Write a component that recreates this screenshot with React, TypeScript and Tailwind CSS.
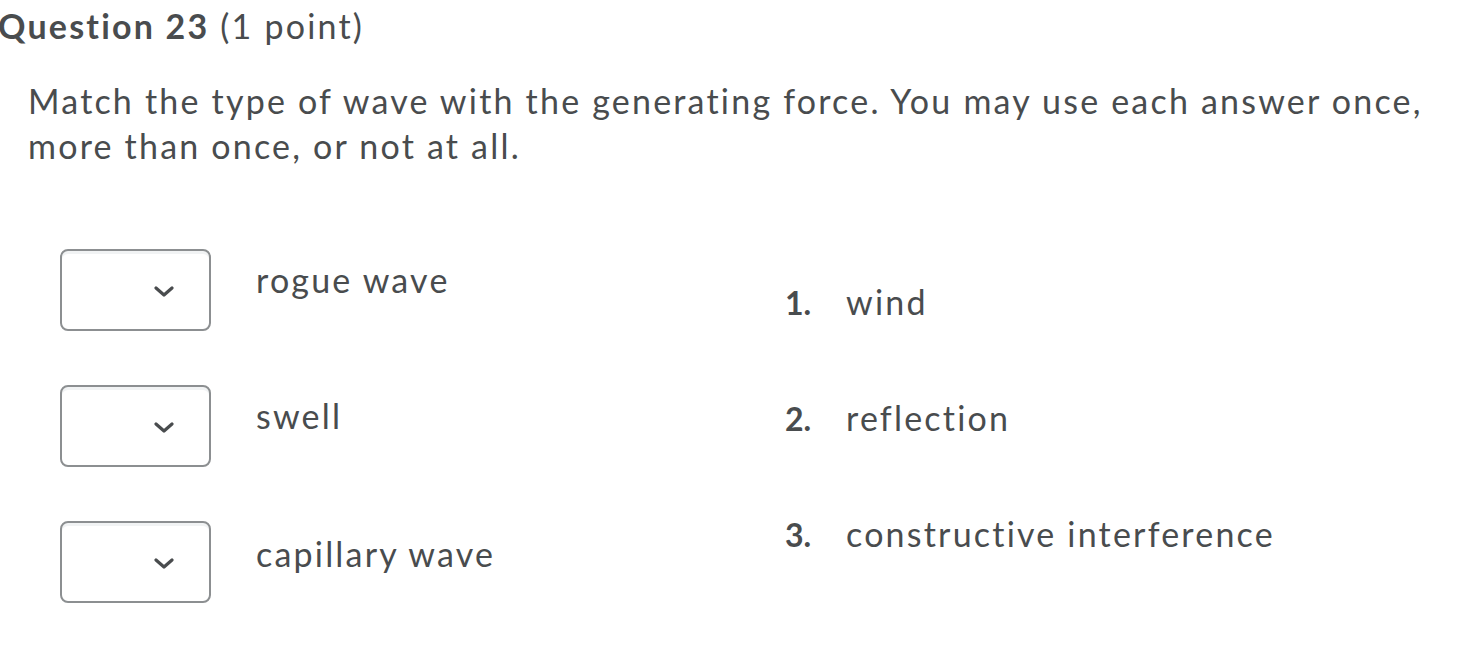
const LEFT = ['rogue wave', 'swell', 'capillary wave'];
const RIGHT = ['wind', 'reflection', 'constructive interference'];

function Select() {
  return (
    <div className="w-[151px] h-[82px] shrink-0 rounded-[8px] border-2 border-[#8c8f91] bg-white shadow-[inset_0_3px_0_#f1f3f4] flex items-center justify-end pr-[34px]">
      <svg width="22" height="12" viewBox="0 0 22 12" fill="none" className="mt-[2px]">
        <polyline points="3,3 11,10 19,3" stroke="#494c4e" strokeWidth="3.2" strokeLinecap="round" strokeLinejoin="round" />
      </svg>
    </div>
  );
}

export default function App() {
  return (
    <div
      className="min-h-screen bg-white text-[#494c4e] tracking-[2.2px] [font-variant-ligatures:none]"
      style={{ fontFamily: 'Lato, "Open Sans", sans-serif' }}
    >
      <h2 className="-ml-[2px] pt-[2px] text-[34px] leading-[48px]">
        <span className="font-bold">Question 23</span> (1 point)
      </h2>

      <p className="pl-[28px] mt-[28px] text-[34px] leading-[45px] max-w-[1440px]">
        Match the type of wave with the generating force. You may use each answer once, more than once, or not at all.
      </p>

      <div className="flex mt-[81px]">
        <div className="w-[785px] pl-[60px] flex flex-col gap-[54px]">
          {LEFT.map((label, i) => (
            <div key={label} className="flex items-start gap-[45px]">
              <Select />
              <span className={`text-[34px] leading-[46px] ${i === 2 ? 'mt-[10px]' : 'mt-[8px]'}`}>{label}</span>
            </div>
          ))}
        </div>
        <ol className="pt-[30px] flex flex-col gap-[69px]">
          {RIGHT.map((t, i) => (
            <li key={t} className="flex items-baseline text-[34px] leading-[46px]">
              <span className="font-bold w-[61px] text-[32px] tracking-normal">{i + 1}.</span>
              <span>{t}</span>
            </li>
          ))}
        </ol>
      </div>
    </div>
  );
}
